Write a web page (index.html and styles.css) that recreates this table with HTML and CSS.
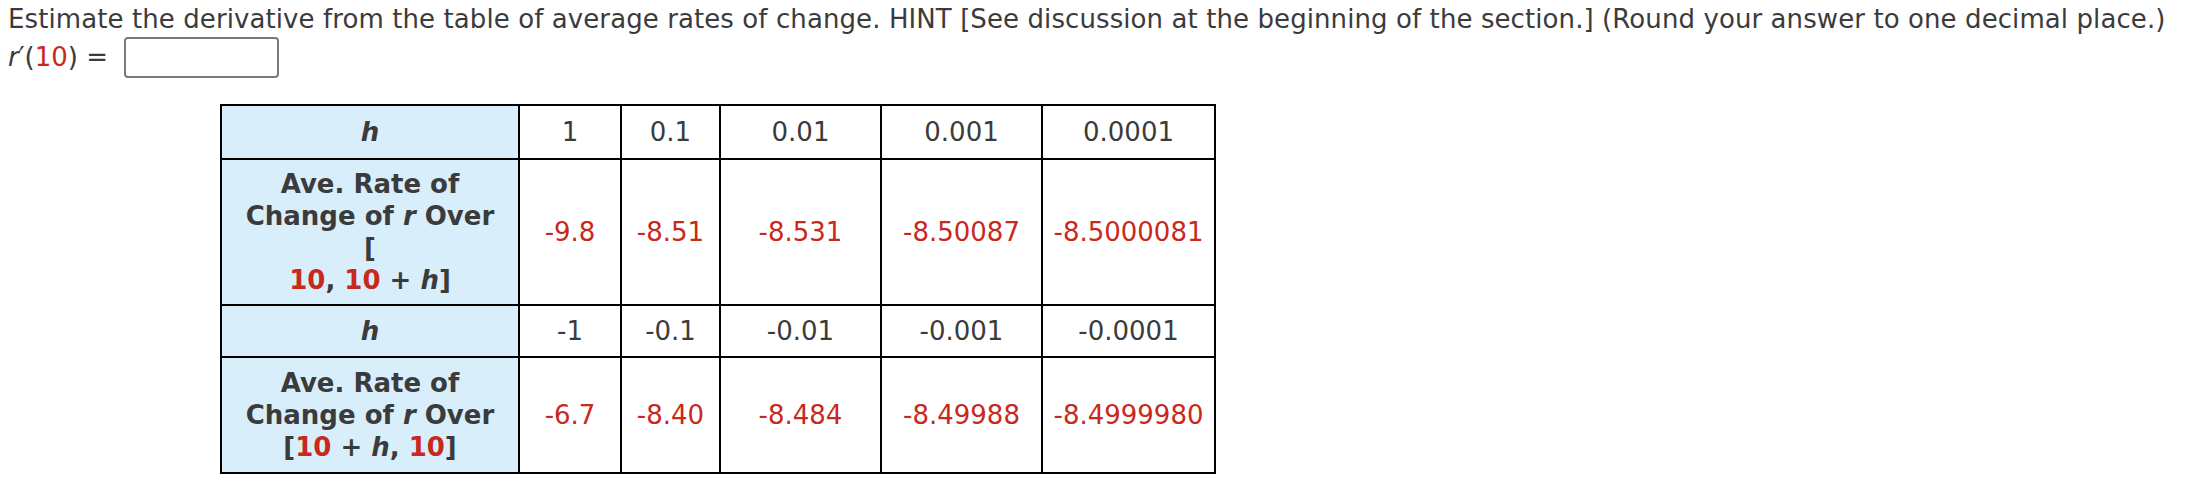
FILE: index.html
```html
<!DOCTYPE html>
<html>
<head>
<meta charset="utf-8">
<link rel="stylesheet" href="styles.css">
</head>
<body>
<div class="question">
  <p class="prompt">Estimate the derivative from the table of average rates of change. HINT [See discussion at the beginning of the section.] (Round your answer to one decimal place.)</p>
  <div class="answer-line">
    <span class="lhs"><i>r</i>′(<span class="red">10</span>) =</span>
    <span class="input-box"></span>
  </div>
  <table class="rates">
    <colgroup>
      <col class="c-head"><col class="c1"><col class="c2"><col class="c3"><col class="c4"><col class="c5">
    </colgroup>
    <tr class="short">
      <th><i>h</i></th>
      <td>1</td><td>0.1</td><td>0.01</td><td>0.001</td><td>0.0001</td>
    </tr>
    <tr>
      <th>Ave. Rate of<br>Change of <i>r</i> Over<br>[<br><span class="red">10</span>, <span class="red">10</span> + <i>h</i>]</th>
      <td class="red">-9.8</td><td class="red">-8.51</td><td class="red">-8.531</td><td class="red">-8.50087</td><td class="red">-8.5000081</td>
    </tr>
    <tr class="short lower">
      <th><i>h</i></th>
      <td>-1</td><td>-0.1</td><td>-0.01</td><td>-0.001</td><td>-0.0001</td>
    </tr>
    <tr>
      <th>Ave. Rate of<br>Change of <i>r</i> Over<br>[<span class="red">10</span> + <i>h</i>, <span class="red">10</span>]</th>
      <td class="red">-6.7</td><td class="red">-8.40</td><td class="red">-8.484</td><td class="red">-8.49988</td><td class="red">-8.4999980</td>
    </tr>
  </table>
</div>
</body>
</html>
```
FILE: styles.css
```css
html, body {
  margin: 0;
  padding: 0;
  background: #ffffff;
}
body {
  padding: 4px 8px;
  font-family: "DejaVu Sans", Verdana, sans-serif;
  font-size: 26px;
  color: #3b3b3b;
}
.prompt {
  margin: 0;
  line-height: 30px;
  white-space: nowrap;
  letter-spacing: 0.09px;
}
.answer-line {
  display: flex;
  align-items: center;
  gap: 16px;
  margin-top: 2px;
  height: 42px;
}
.lhs {
  white-space: nowrap;
}
.input-box {
  display: inline-block;
  width: 151px;
  height: 37px;
  border: 2px solid #7a7a7a;
  border-radius: 4px;
  background: #fff;
}
.red {
  color: #c9281c;
}
.rates {
  border-collapse: collapse;
  table-layout: fixed;
  margin: 26px 0 0 212px;
}
.rates th, .rates td {
  border: 2px solid #000;
  text-align: center;
  vertical-align: middle;
  line-height: 32px;
  padding: 8px 2px;
  white-space: nowrap;
}
.rates th {
  background: #d9eefb;
  font-weight: bold;
}
.rates tr.short th, .rates tr.short td {
  padding: 10px 2px;
}
.rates tr.short.lower th, .rates tr.short.lower td {
  padding: 9px 2px;
}
.rates tr.short.lower + tr th, .rates tr.short.lower + tr td {
  padding: 9px 2px;
}
.c-head { width: 298px; }
.c1 { width: 102px; }
.c2 { width: 99px; }
.c3 { width: 161px; }
.c4 { width: 161px; }
.c5 { width: 173px; }
```
